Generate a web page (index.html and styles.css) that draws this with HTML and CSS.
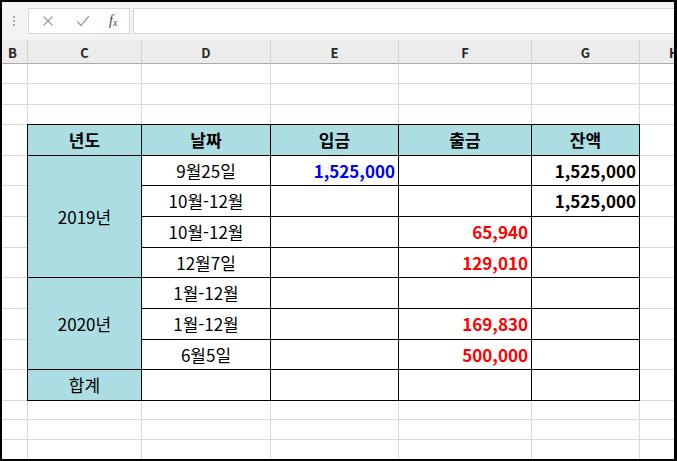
FILE: index.html
```html
<!DOCTYPE html>
<html lang="ko">
<head>
<meta charset="utf-8">
<title>Sheet</title>
<link rel="stylesheet" href="styles.css">
</head>
<body>
<div class="window">
  <div class="formula-bar">
    <div class="grip">
      <span class="dot"></span><span class="dot"></span><span class="dot"></span>
    </div>
    <div class="fx-box">
      <svg class="fb-icon" width="12" height="12" viewBox="0 0 12 12"><path d="M1.5 1.5 L10.5 10.5 M10.5 1.5 L1.5 10.5" stroke="#9c9c9c" stroke-width="1.1" fill="none"/></svg>
      <svg class="fb-icon" width="14" height="12" viewBox="0 0 14 12"><path d="M1 6.5 L5 10.5 L13 1" stroke="#9c9c9c" stroke-width="1.2" fill="none"/></svg>
      <span class="fx">f<sub>x</sub></span>
    </div>
    <div class="formula-input"></div>
  </div>
  <div class="sheet">
    <div class="colhead ch-b">B</div>
    <div class="colhead">C</div>
    <div class="colhead">D</div>
    <div class="colhead">E</div>
    <div class="colhead">F</div>
    <div class="colhead">G</div>
    <div class="colhead ch-h">H</div>

    <div class="cell first nb"></div><div class="cell first"></div><div class="cell first"></div><div class="cell first"></div><div class="cell first"></div><div class="cell first"></div><div class="cell first"></div>
    <div class="cell nb"></div><div class="cell"></div><div class="cell"></div><div class="cell"></div><div class="cell"></div><div class="cell"></div><div class="cell"></div>
    <div class="cell nb"></div><div class="cell"></div><div class="cell"></div><div class="cell"></div><div class="cell"></div><div class="cell"></div><div class="cell"></div>

    <div class="cell nb col-b"></div>
    <div class="data-table">
      <div class="t head">년도</div>
      <div class="t head">날짜</div>
      <div class="t head">입금</div>
      <div class="t head">출금</div>
      <div class="t head">잔액</div>

      <div class="t head-soft y2019">2019년</div>
      <div class="t">9월25일</div>
      <div class="t num blue">1,525,000</div>
      <div class="t"></div>
      <div class="t num black">1,525,000</div>

      <div class="t">10월-12월</div>
      <div class="t"></div>
      <div class="t"></div>
      <div class="t num black">1,525,000</div>

      <div class="t">10월-12월</div>
      <div class="t"></div>
      <div class="t num red">65,940</div>
      <div class="t"></div>

      <div class="t">12월7일</div>
      <div class="t"></div>
      <div class="t num red">129,010</div>
      <div class="t"></div>

      <div class="t head-soft y2020">2020년</div>
      <div class="t">1월-12월</div>
      <div class="t"></div>
      <div class="t"></div>
      <div class="t"></div>

      <div class="t">1월-12월</div>
      <div class="t"></div>
      <div class="t num red">169,830</div>
      <div class="t"></div>

      <div class="t">6월5일</div>
      <div class="t"></div>
      <div class="t num red">500,000</div>
      <div class="t"></div>

      <div class="t head-soft">합계</div>
      <div class="t"></div>
      <div class="t"></div>
      <div class="t"></div>
      <div class="t"></div>
    </div>
    <div class="cell col-h"></div>
    <div class="cell nb col-b"></div><div class="cell col-h"></div>
    <div class="cell nb col-b"></div><div class="cell col-h"></div>
    <div class="cell nb col-b"></div><div class="cell col-h"></div>
    <div class="cell nb col-b"></div><div class="cell col-h"></div>
    <div class="cell nb col-b"></div><div class="cell col-h"></div>
    <div class="cell nb col-b"></div><div class="cell col-h"></div>
    <div class="cell nb col-b"></div><div class="cell col-h"></div>
    <div class="cell nb col-b"></div><div class="cell col-h"></div>

    <div class="cell nb"></div><div class="cell"></div><div class="cell"></div><div class="cell"></div><div class="cell"></div><div class="cell"></div><div class="cell"></div>
    <div class="cell nb"></div><div class="cell"></div><div class="cell"></div><div class="cell"></div><div class="cell"></div><div class="cell"></div><div class="cell"></div>
    <div class="cell nb"></div><div class="cell"></div><div class="cell"></div><div class="cell"></div><div class="cell"></div><div class="cell"></div><div class="cell"></div>
  </div>
</div>
</body>
</html>
```
FILE: styles.css
```css
* { box-sizing: border-box; }
html, body { margin: 0; padding: 0; background: #fff; }
body { font-family: "Noto Sans CJK KR", "Noto Sans", sans-serif; }

.window {
  width: 677px;
  height: 461px;
  border-style: solid;
  border-color: #000;
  border-width: 2px 3px 2px 2px;
  overflow: hidden;
  background: #fff;
}

.formula-bar {
  height: 38px;
  background: #f3f3f3;
  display: flex;
  align-items: center;
  padding: 0 0 0 10px;
}
.grip {
  width: 4px;
  display: flex;
  flex-direction: column;
  gap: 2px;
  align-items: center;
  margin-right: 12px;
}
.dot { width: 2px; height: 2px; background: #a8a8a8; display: block; }
.fx-box {
  width: 102px;
  height: 26px;
  background: #fff;
  border: 1px solid #d6d6d6;
  display: flex;
  align-items: center;
  padding-left: 13px;
}
.fb-icon { display: block; }
.fb-icon + .fb-icon { margin-left: 22px; }
.fx {
  margin-left: 19px;
  font-family: "Liberation Serif", serif;
  font-style: italic;
  font-size: 14px;
  color: #444;
  line-height: 1;
}
.fx sub { font-size: 10px; vertical-align: -1px; }
.formula-input {
  flex: 1;
  height: 26px;
  margin-left: 3px;
  background: #fff;
  border: 1px solid #d6d6d6;
  border-right: none;
}

.sheet {
  display: grid;
  grid-template-columns: 25px 114px 129px 128px 133px 108px 35px;
  grid-template-rows: 24px 19px 21px 20px 31px 30px 31px 31px 30px 31px 31px 30px 31px 19px 20px 20px;
}

.colhead {
  background: #ececec;
  border-bottom: 1px solid #a9a9a9;
  border-left: 1px solid #d2d2d2;
  font-size: 13px;
  color: #262626;
  display: flex;
  align-items: center;
  justify-content: center;
  padding-top: 1px;
  font-weight: 700;
}
.colhead.ch-b { border-left: none; justify-content: flex-start; padding-left: 6px; }
.colhead.ch-h { justify-content: flex-start; padding-left: 29px; }

.cell {
  border-left: 1px solid #dadada;
  border-top: 1px solid #dadada;
}
.cell.first { border-top: none; }
.cell.nb { border-left: none; }
.col-b { grid-column: 1; }
.col-h { grid-column: 7; }

.data-table {
  grid-column: 2 / 7;
  grid-row: 5 / 14;
  width: 613px;
  margin-right: -1px;
  margin-bottom: -1px;
  display: grid;
  grid-template-columns: 114px 129px 128px 133px 108px;
  grid-template-rows: 31px 30px 31px 31px 30px 31px 31px 30px 31px;
  border-right: 1px solid #000;
  border-bottom: 1px solid #000;
  position: relative;
  z-index: 1;
  background: #fff;
}

.t {
  border-left: 1px solid #000;
  border-top: 1px solid #000;
  display: flex;
  align-items: center;
  justify-content: center;
  font-size: 17px;
  color: #000;
  padding-bottom: 1px;
  white-space: nowrap;
}
.t.head {
  background: #abdde3;
  font-weight: 700;
}
.t.head-soft { background: #abdde3; }
.y2019 { grid-row: 2 / 6; }
.y2020 { grid-row: 6 / 9; }
.t.num {
  justify-content: flex-end;
  padding-right: 3px;
  font-weight: 700;
}
.blue { color: #0000ff; }
.red { color: #ff0000; }
.black { color: #000; }
```
